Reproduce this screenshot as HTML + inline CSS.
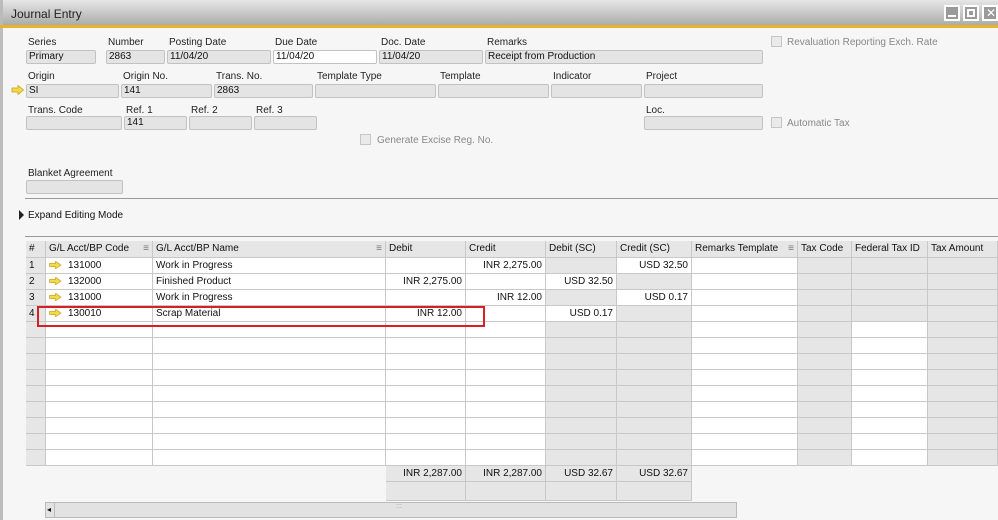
<!DOCTYPE html>
<html><head><meta charset="utf-8"><style>
*{box-sizing:border-box;margin:0;padding:0}
body{width:998px;height:520px;overflow:hidden;background:#f6f6f6;font-family:"Liberation Sans","DejaVu Sans",sans-serif;font-size:10px;color:#111;position:relative}
.a{position:absolute;white-space:nowrap}
.tb{left:0;top:0;width:998px;height:26px;background:linear-gradient(#e6e6e6,#a9a9a9);border-left:3px solid #bbb}
.ol{left:0;top:25px;width:998px;height:3px;background:#e8b32a}
.lb{font-size:10px;color:#222}
.f{height:14px;background:#e4e4e4;border:1px solid #c2c2c2;border-radius:2px;padding-left:2px;line-height:12px;font-size:10px}
.w{background:#fff}
.cb{width:11px;height:11px;border:1px solid #c6c6c6;background:#eaeaea}
.gt{color:#888}
.c{position:absolute;border-right:1px solid #c8c8c8;border-bottom:1px solid #c8c8c8;height:16px;line-height:15px;padding:0 3px;font-size:10px;overflow:hidden}
.r{text-align:right}
.g{background:#e6e6e6}
.wh{background:#fff}
.arr{display:inline-block;width:13px;height:8px;vertical-align:-1px;margin-right:6px}
</style></head><body>
<div class="a" style="left:0;top:0;width:3px;height:520px;background:#bdbdbd"></div>
<div class="a tb"></div><div class="a ol"></div>
<div class="a" style="left:11px;top:7px;font-size:12px;color:#222">Journal Entry</div>
<div class="a" style="left:944px;top:5px;width:16px;height:16px;border:2px solid #fff;background:#9a9a9a"><div style="position:absolute;left:2px;bottom:2px;width:8px;height:2px;background:#fff"></div></div>
<div class="a" style="left:963px;top:5px;width:16px;height:16px;border:2px solid #fff;background:#9a9a9a"><div style="position:absolute;left:2px;top:2px;width:8px;height:8px;border:2px solid #fff"></div></div>
<div class="a" style="left:982px;top:5px;width:16px;height:16px;border:2px solid #fff;background:#9a9a9a;color:#fff;font-weight:bold;font-size:12px;line-height:12px;padding-left:2px">✕</div>

<div class="a lb" style="left:28px;top:37px">Series</div>
<div class="a lb" style="left:108px;top:37px">Number</div>
<div class="a lb" style="left:169px;top:37px">Posting Date</div>
<div class="a lb" style="left:275px;top:37px">Due Date</div>
<div class="a lb" style="left:381px;top:37px">Doc. Date</div>
<div class="a lb" style="left:487px;top:37px">Remarks</div>
<div class="a f" style="left:26px;top:50px;width:70px">Primary</div>
<div class="a f" style="left:106px;top:50px;width:59px">2863</div>
<div class="a f" style="left:167px;top:50px;width:104px">11/04/20</div>
<div class="a f w" style="left:273px;top:50px;width:104px">11/04/20</div>
<div class="a f" style="left:379px;top:50px;width:104px">11/04/20</div>
<div class="a f" style="left:485px;top:50px;width:278px">Receipt from Production</div>
<div class="a cb" style="left:771px;top:36px"></div>
<div class="a gt" style="left:787px;top:37px">Revaluation Reporting Exch. Rate</div>

<div class="a lb" style="left:28px;top:71px">Origin</div>
<div class="a lb" style="left:123px;top:71px">Origin No.</div>
<div class="a lb" style="left:216px;top:71px">Trans. No.</div>
<div class="a lb" style="left:317px;top:71px">Template Type</div>
<div class="a lb" style="left:440px;top:71px">Template</div>
<div class="a lb" style="left:553px;top:71px">Indicator</div>
<div class="a lb" style="left:646px;top:71px">Project</div>
<svg class="a" style="left:11px;top:85px" width="14" height="10"><path d="M1 3h6V0.5L12.5 5 7 9.5V7H1z" fill="#f5d84a" stroke="#c9a21c" stroke-width="0.8"/></svg>
<div class="a f" style="left:26px;top:84px;width:93px">SI</div>
<div class="a f" style="left:121px;top:84px;width:91px">141</div>
<div class="a f" style="left:214px;top:84px;width:99px">2863</div>
<div class="a f" style="left:315px;top:84px;width:121px"></div>
<div class="a f" style="left:438px;top:84px;width:111px"></div>
<div class="a f" style="left:551px;top:84px;width:91px"></div>
<div class="a f" style="left:644px;top:84px;width:119px"></div>

<div class="a lb" style="left:28px;top:105px">Trans. Code</div>
<div class="a lb" style="left:126px;top:105px">Ref. 1</div>
<div class="a lb" style="left:191px;top:105px">Ref. 2</div>
<div class="a lb" style="left:256px;top:105px">Ref. 3</div>
<div class="a lb" style="left:646px;top:105px">Loc.</div>
<div class="a f" style="left:26px;top:116px;width:96px"></div>
<div class="a f" style="left:124px;top:116px;width:63px">141</div>
<div class="a f" style="left:189px;top:116px;width:63px"></div>
<div class="a f" style="left:254px;top:116px;width:63px"></div>
<div class="a f" style="left:644px;top:116px;width:119px"></div>
<div class="a cb" style="left:771px;top:117px"></div>
<div class="a gt" style="left:787px;top:118px">Automatic Tax</div>
<div class="a cb" style="left:360px;top:134px"></div>
<div class="a gt" style="left:377px;top:135px">Generate Excise Reg. No.</div>

<div class="a lb" style="left:28px;top:168px">Blanket Agreement</div>
<div class="a f" style="left:26px;top:180px;width:97px"></div>
<div class="a" style="left:25px;top:198px;width:973px;height:1px;background:#9a9a9a"></div>
<div class="a" style="left:19px;top:210px;width:0;height:0;border-left:5px solid #222;border-top:5px solid transparent;border-bottom:5px solid transparent"></div>
<div class="a" style="left:28px;top:210px">Expand Editing Mode</div>
<div class="a" style="left:25px;top:236px;width:973px;height:1px;background:#9a9a9a"></div>

<div id="grid"></div>
<div class="a" style="left:45px;top:502px;width:692px;height:16px;background:#e2e2e2;border:1px solid #bbb"></div>
<div class="a" style="left:45px;top:502px;width:10px;height:16px;border-right:1px solid #bbb;font-size:8px;line-height:15px;padding-left:2px">◂</div>
<div class="a" style="left:396px;top:503px;font-size:7px;color:#999">:::</div>
<div class="a" style="left:37px;top:306px;width:448px;height:21px;border:2px solid #d61f26"></div>
<script>
var cols=[[26,20],[46,107],[153,233],[386,80],[466,80],[546,71],[617,75],[692,106],[798,54],[852,76],[928,70]];
var hdr=["#","G/L Acct/BP Code","G/L Acct/BP Name","Debit","Credit","Debit (SC)","Credit (SC)","Remarks Template","Tax Code","Federal Tax ID","Tax Amount"];
var data=[["1","131000","Work in Progress","","INR 2,275.00","","USD 32.50"],["2","132000","Finished Product","INR 2,275.00","","USD 32.50",""],["3","131000","Work in Progress","","INR 12.00","","USD 0.17"],["4","130010","Scrap Material","INR 12.00","","USD 0.17",""]];
var h="",arr='<svg class="arr" width="13" height="8"><path d="M0.5 2.5h6V0.3L12 4 6.5 7.7V5.5h-6z" fill="#f6d94a" stroke="#c9a21c" stroke-width="0.7"/></svg>';
function cell(x,y,w,hh,cls,t){h+='<div class="c '+cls+'" style="left:'+x+'px;top:'+y+'px;width:'+w+'px;height:'+hh+'px">'+t+'</div>';}
cols.forEach(function(c,i){cell(c[0],241,c[1],17,'g',hdr[i]+((i==1||i==2||i==7)?'<span style="float:right;color:#777">≡</span>':''));});
for(var r=0;r<13;r++){var y=258+r*16;var d=data[r]||[];
cols.forEach(function(c,i){var cls='wh',t=d[i]||'';
if(i==0)cls='g';
if(i==5)cls=(r==1||r==3)?'wh':'g';
if(i==6)cls=(r==0||r==2)?'wh':'g';
if(i==8||i==10)cls='g';
if(i==9)cls=r<4?'g':'wh';
if(i>=3&&i<=6)cls+=' r';
if(i==1&&t)t=arr+t;
cell(c[0],y,c[1],16,cls,t);});}
var tot=["INR 2,287.00","INR 2,287.00","USD 32.67","USD 32.67"];
for(var i=3;i<=6;i++){cell(cols[i][0],466,cols[i][1],16,'g r',tot[i-3]);cell(cols[i][0],482,cols[i][1],19,'g','');}
document.getElementById('grid').innerHTML=h;
</script>
</body></html>
